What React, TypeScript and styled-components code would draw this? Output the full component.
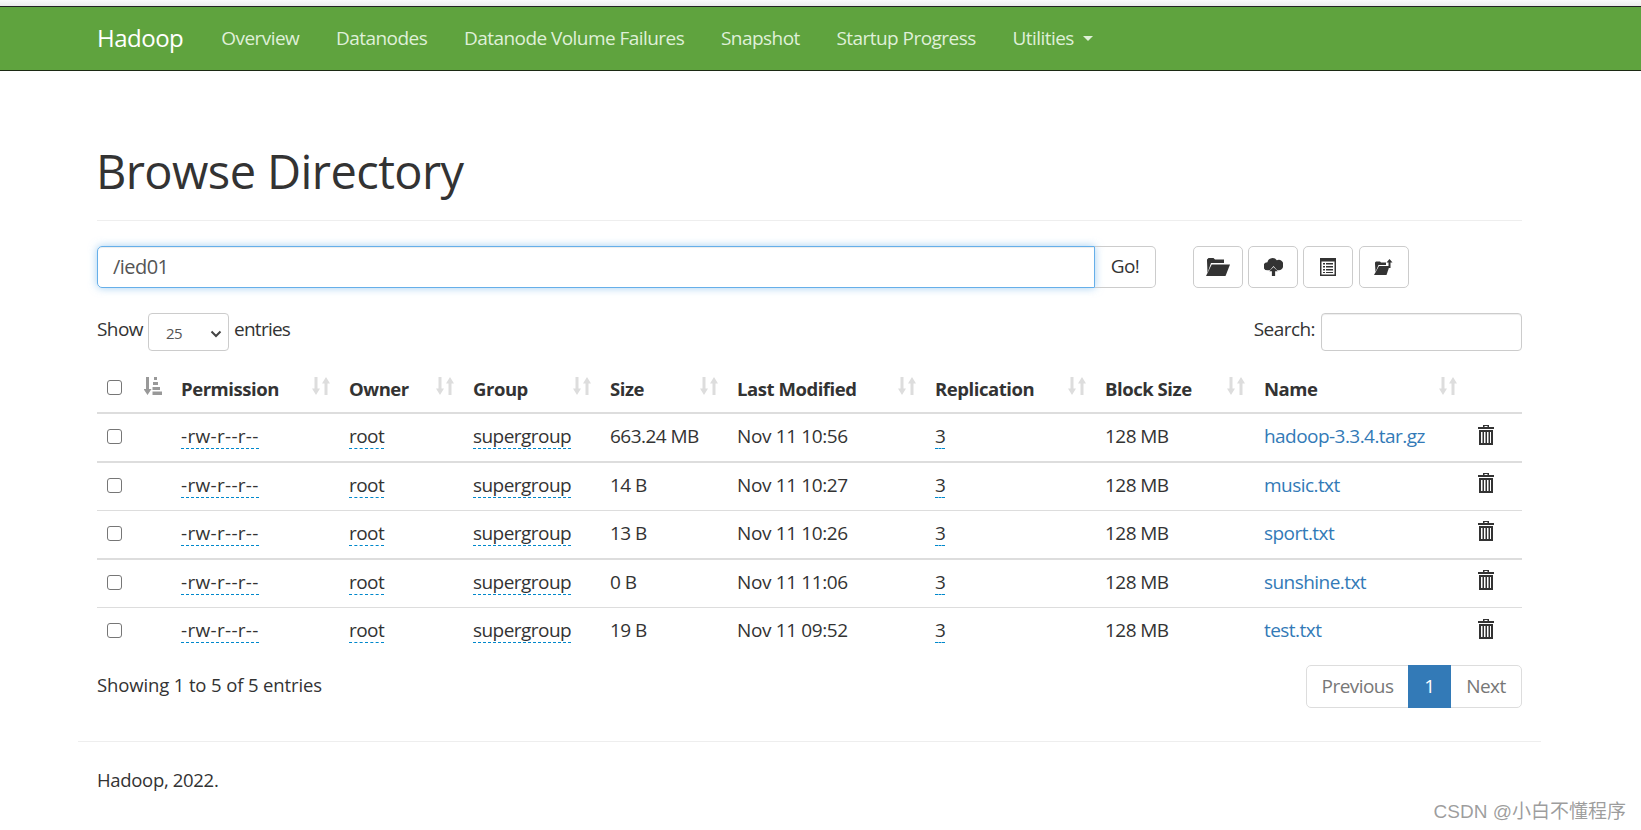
import React from "react";
import styled, { createGlobalStyle } from "styled-components";

const Global = createGlobalStyle`
  html, body { margin: 0; padding: 0; background: #fff; }
  body {
    font-family: "Open Sans", "Noto Sans", "Liberation Sans", sans-serif;
    font-size: 17.5px;
    letter-spacing: -0.55px;
    line-height: 25px;
    color: #333;
    height: 830px;
    overflow: hidden;
  }
`;

const Page = styled.div`
  position: relative;
  width: 1641px;
  height: 830px;
  overflow: hidden;
`;
const TopStrip = styled.div`
  height: 6px;
  background: linear-gradient(#fafafa, #ececec);
  border-bottom: 1px solid #222;
`;
const Navbar = styled.nav`
  height: 64px;
  box-sizing: border-box;
  background: #5fa33e;
  border-bottom: 1px solid #1c2a14;
  display: flex;
  align-items: center;
  padding: 0 97px;
`;
const Brand = styled.span`
  color: #fff;
  font-size: 24px;
  letter-spacing: -0.5px;
  margin-right: 38px;
  margin-top: -2px;
`;
const NavLink = styled.span`
  color: #dff0d8;
  font-size: 19px;
  letter-spacing: -0.55px;
  margin-right: 36.75px;
  display: inline-flex;
  align-items: center;
`;
const Caret = styled.i`
  display: inline-block;
  width: 0;
  height: 0;
  margin-left: 9px;
  border-top: 5px solid #dff0d8;
  border-left: 5px solid transparent;
  border-right: 5px solid transparent;
`;
const Container = styled.main`
  width: 1461px;
  margin-left: 79px;
  box-sizing: border-box;
  padding: 0 18px;
`;
const Title = styled.h1`
  margin: 0;
  padding: 66px 0 15px;
  font-size: 47px;
  line-height: 68px;
  font-weight: 400;
  letter-spacing: -0.6px;
  text-indent: -1px;
  color: #333;
  border-bottom: 1px solid #eee;
`;
const Toolbar = styled.div`
  display: flex;
  align-items: stretch;
  height: 41.5px;
  margin-top: 25px;
`;
const PathInput = styled.div`
  width: 998px;
  box-sizing: border-box;
  border: 1px solid #66afe9;
  border-radius: 5px 0 0 5px;
  box-shadow: inset 0 1px 1px rgba(0,0,0,.075), 0 0 8px rgba(102,175,233,.6);
  padding: 0 15px;
  font-size: 20px;
  display: flex;
  align-items: center;
  color: #555;
`;
const GoButton = styled.div`
  width: 61px;
  box-sizing: border-box;
  border: 1px solid #ccc;
  border-left: none;
  border-radius: 0 5px 5px 0;
  font-size: 19px;
  display: flex;
  align-items: center;
  justify-content: center;
`;
const IconGroup = styled.div`
  display: flex;
  gap: 5.2px;
  margin-left: 37px;
`;
const IconButton = styled.div`
  width: 50px;
  box-sizing: border-box;
  border: 1px solid #ccc;
  border-radius: 5px;
  display: flex;
  align-items: center;
  justify-content: center;
  color: #333;
`;
const Controls = styled.div`
  display: flex;
  justify-content: space-between;
  align-items: center;
  height: 38px;
  margin-top: 25.5px;
  font-size: 19px;
`;
const ControlGroup = styled.div`
  display: flex;
  align-items: center;
`;
const ControlText = styled.span`
  margin-bottom: 5px;
`;
const Select = styled.div`
  width: 81px;
  height: 38px;
  box-sizing: border-box;
  margin: 0 5px 0 5px;
  border: 1px solid #ccc;
  border-radius: 4px;
  padding: 3px 6px 0 17px;
  font-size: 15px;
  color: #555;
  display: flex;
  align-items: center;
  justify-content: space-between;
`;
const SearchLabel = styled(ControlText)`
  margin-right: 6px;
`;
const EntriesText = styled(ControlText)`
  letter-spacing: -0.75px;
`;
const SearchBox = styled.div`
  width: 201px;
  height: 38px;
  box-sizing: border-box;
  border: 1px solid #ccc;
  border-radius: 4px;
  box-shadow: inset 0 1px 1px rgba(0,0,0,.075);
`;
const Table = styled.table`
  width: 1425px;
  table-layout: fixed;
  border-collapse: collapse;
  margin-top: 14px;
  font-size: 19px;
`;
const Th = styled.th`
  height: 48px;
  box-sizing: border-box;
  padding: 0 10px;
  text-align: left;
  font-weight: 700;
  font-size: 18.5px;
  border-bottom: 2px solid #ddd;
  position: relative;
`;
const Td = styled.td`
  height: 48.5px;
  box-sizing: border-box;
  padding: 0 10px 1.5px;
  border-bottom: 1px solid #ddd;
`;
const Row = styled.tr`
  &:nth-child(odd) td { border-bottom-width: 2px; }
  &:last-child td { border-bottom: none; }
`;
const Dotted = styled.span`
  display: inline-block;
  line-height: 23px;
  border-bottom: 1px dashed #08c;
`;
const PermissionText = styled(Dotted)`
  letter-spacing: 0.3px;
`;
const DateCell = styled(Td)`
  letter-spacing: -0.38px;
`;
const FileLink = styled.span`
  color: #337ab7;
`;
const CheckBox = styled.i<{ $lift?: boolean }>`
  display: block;
  width: 15px;
  height: 15px;
  box-sizing: border-box;
  border: 1.3px solid #767676;
  border-radius: 3px;
  background: #fff;
  margin-top: ${p => (p.$lift ? "-3px" : "0")};
`;
const SortMark = styled.span<{ $right: number }>`
  position: absolute;
  right: ${p => p.$right}px;
  top: 12px;
  display: block;
  line-height: 0;
`;
const HeaderLabel = styled.span`
  letter-spacing: -0.45px;
`;
const TrashSlot = styled.div`
  margin: -4px 0 0 2px;
`;
const Footer = styled.div`
  display: flex;
  justify-content: space-between;
  align-items: flex-start;
  margin-top: 9px;
  font-size: 18.5px;
`;
const FooterText = styled.span`
  margin-top: 7px;
  letter-spacing: -0.13px;
`;
const Pager = styled.div`
  display: flex;
  height: 43px;
  box-sizing: border-box;
  border: 1px solid #ddd;
  border-radius: 5px;
  color: #777;
  font-size: 19px;
`;
const PageItem = styled.span<{ $active?: boolean; $w: number }>`
  width: ${p => p.$w}px;
  display: flex;
  align-items: center;
  justify-content: center;
  margin: ${p => (p.$active ? "-1px 0" : "0")};
  background: ${p => (p.$active ? "#337ab7" : "transparent")};
  color: ${p => (p.$active ? "#fff" : "#777")};
`;
const Rule = styled.hr`
  width: 1463px;
  margin: 33px 0 0 78px;
  border: none;
  border-top: 1px solid #eee;
`;
const Copy = styled.p`
  margin: 25px 0 0 97px;
  font-size: 18.5px;
  letter-spacing: -0.32px;
`;
const Watermark = styled.span`
  position: absolute;
  right: 15px;
  top: 799px;
  font-family: "Liberation Sans", "Noto Sans CJK SC", sans-serif;
  font-size: 19px;
  letter-spacing: 0;
  color: rgba(120,120,120,.72);
`;

const SortIcon = ({ dark }: { dark?: boolean }) => (
  <svg width="18" height="18" viewBox="0 0 18 18" fill={dark ? "#999" : "#ddd"}>
    {dark ? (
      <>
        <path d="M2 0h3v12h2.500L3.500 18-.500 12H2z" />
        <path d="M10 0h3v3h-3zM9 5h5v3H9zM8.500 10H16v3H8.500zM8.500 14.500H18V18H8.500z" />
      </>
    ) : (
      <>
        <path d="M2.500 0h3v11.500H8L4 18 0 11.500h2.500z" />
        <path d="M12.500 18h3V6.500H18L14 0l-4 6.500h2.500z" />
      </>
    )}
  </svg>
);

const Trash = () => (
  <svg width="16" height="20" viewBox="0 0 16 20" fill="#333" style={{ display: "block" }}>
    <path d="M5 0h6v2h5v2H0V2h5zM6.500 1v1h3V1z" fillRule="evenodd" />
    <path d="M1 5h14v15H1zM3 7v11h1.500V7zM6 7v11h1.500V7zM9 7v11h1.500V7zM12 7v11h1V7z" fillRule="evenodd" />
  </svg>
);

const FolderOpen = () => (
  <svg width="24" height="18" viewBox="0 0 24 18" fill="#333">
    <path d="M1 3V1.500L2.500 0h5L9 1.500h9V5H5L1.500 15z" />
    <path d="M5.700 6.500H24L19.500 18H0z" />
  </svg>
);
const CloudUp = () => (
  <svg width="19" height="19" viewBox="0 0 20 20" fill="#333">
    <path d="M4 14a4 4 0 0 1-.4-8.500A5.500 5.500 0 0 1 13.500 3.500 4.500 4.500 0 0 1 20 8.500 4.500 4.500 0 0 1 16 14h-2.500L10 9.500 6.500 14z" />
    <path d="M10 10.500L14.500 15H11.700v5H8.300v-5H5.500z" stroke="#fff" strokeWidth="0.6" paintOrder="stroke" />
  </svg>
);
const ListAlt = () => (
  <svg width="16" height="18" viewBox="0 0 16 18">
    <path fill="#333" fillRule="evenodd" d="M0 0h16v18H0zM1.500 3.500v13h13v-13z" />
    <path fill="#333" d="M3 5h2v1.600H3zM6 5h7v1.600H6zM3 8h2v1.600H3zM6 8h7v1.600H6zM3 11h2v1.600H3zM6 11h7v1.600H6zM3 14h2v1h-2zM6 14h7v1H6z" />
  </svg>
);
const FolderUp = () => (
  <svg width="19" height="16" viewBox="0 0 19 16" fill="#333">
    <path d="M1 5V3.500L2 2.500h4L7 3.500h5V6H4.500L1.500 13z" />
    <path d="M5 7h10.500l-3 9H0z" />
    <path d="M15.500 0l3 3.500h-2V9h-2V3.500h-2z" />
  </svg>
);
const Chevron = () => (
  <svg width="12" height="8" viewBox="0 0 12 8" fill="none" stroke="#444" strokeWidth="2">
    <path d="M1.500 1.500L6 6l4.500-4.500" />
  </svg>
);

const columns = [
  { w: 74 }, { w: 168, t: "Permission" }, { w: 124, t: "Owner" }, { w: 137, t: "Group" },
  { w: 127, t: "Size" }, { w: 198, t: "Last Modified" }, { w: 170, t: "Replication" },
  { w: 159, t: "Block Size" }, { w: 212, t: "Name" }, { w: 56 },
];
const files = [
  ["663.24 MB", "Nov 11 10:56", "hadoop-3.3.4.tar.gz"],
  ["14 B", "Nov 11 10:27", "music.txt"],
  ["13 B", "Nov 11 10:26", "sport.txt"],
  ["0 B", "Nov 11 11:06", "sunshine.txt"],
  ["19 B", "Nov 11 09:52", "test.txt"],
];
const nav = ["Overview", "Datanodes", "Datanode Volume Failures", "Snapshot", "Startup Progress"];

export default function App() {
  return (
    <Page>
      <Global />
      <TopStrip />
      <Navbar>
        <Brand>Hadoop</Brand>
        {nav.map(n => <NavLink key={n}>{n}</NavLink>)}
        <NavLink>Utilities<Caret /></NavLink>
      </Navbar>
      <Container>
        <Title>Browse Directory</Title>
        <Toolbar>
          <PathInput>/ied01</PathInput>
          <GoButton>Go!</GoButton>
          <IconGroup>
            <IconButton><FolderOpen /></IconButton>
            <IconButton><CloudUp /></IconButton>
            <IconButton><ListAlt /></IconButton>
            <IconButton><FolderUp /></IconButton>
          </IconGroup>
        </Toolbar>
        <Controls>
          <ControlGroup>
            <ControlText>Show</ControlText>
            <Select>25<Chevron /></Select>
            <EntriesText>entries</EntriesText>
          </ControlGroup>
          <ControlGroup><SearchLabel>Search:</SearchLabel><SearchBox /></ControlGroup>
        </Controls>
        <Table>
          <colgroup>{columns.map((c, i) => <col key={i} width={c.w} />)}</colgroup>
          <thead>
            <tr>
              <Th><CheckBox $lift /><SortMark $right={9}><SortIcon dark /></SortMark></Th>
              {columns.slice(1, 9).map(c => (
                <Th key={c.t}><HeaderLabel>{c.t}</HeaderLabel><SortMark $right={9}><SortIcon /></SortMark></Th>
              ))}
              <Th />
            </tr>
          </thead>
          <tbody>
            {files.map(([size, date, name]) => (
              <Row key={name}>
                <Td><CheckBox /></Td>
                <Td><PermissionText>-rw-r--r--</PermissionText></Td>
                <Td><Dotted>root</Dotted></Td>
                <Td><Dotted>supergroup</Dotted></Td>
                <Td>{size}</Td>
                <DateCell>{date}</DateCell>
                <Td><Dotted>3</Dotted></Td>
                <Td>128 MB</Td>
                <Td><FileLink>{name}</FileLink></Td>
                <Td><TrashSlot><Trash /></TrashSlot></Td>
              </Row>
            ))}
          </tbody>
        </Table>
        <Footer>
          <FooterText>Showing 1 to 5 of 5 entries</FooterText>
          <Pager>
            <PageItem $w={101}>Previous</PageItem>
            <PageItem $w={43} $active>1</PageItem>
            <PageItem $w={70}>Next</PageItem>
          </Pager>
        </Footer>
      </Container>
      <Rule />
      <Copy>Hadoop, 2022.</Copy>
      <Watermark>CSDN @小白不懂程序</Watermark>
    </Page>
  );
}
